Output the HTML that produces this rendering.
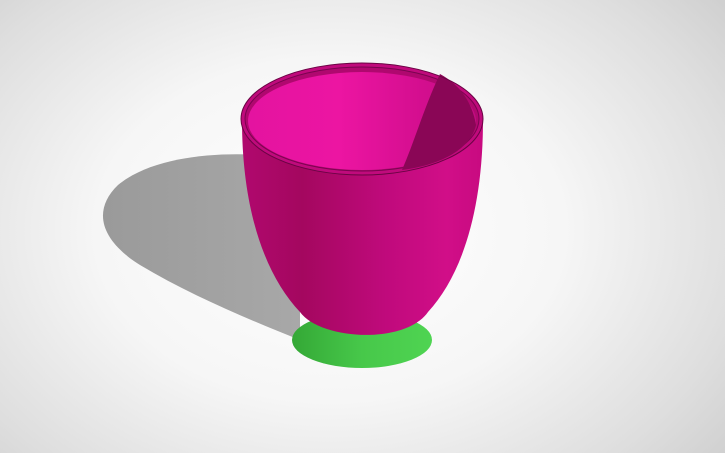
<!DOCTYPE html>
<html><head><style>
html,body{margin:0;padding:0;width:725px;height:453px;overflow:hidden}
body{background:radial-gradient(ellipse 520px 380px at 330px 230px,#ffffff 0%,#f6f6f6 45%,#dedede 80%,#cdcdcd 100%)}
</style></head><body>
<svg width="725" height="453" viewBox="0 0 725 453" xmlns="http://www.w3.org/2000/svg">
<defs>
<linearGradient id="sh" x1="0" y1="0" x2="1" y2="0">
<stop offset="0" stop-color="#9a9a9a"/><stop offset="1" stop-color="#a8a8a8"/></linearGradient>
<linearGradient id="body" x1="0" y1="0" x2="1" y2="0">
<stop offset="0" stop-color="#b0086e"/><stop offset="0.25" stop-color="#a4075f"/><stop offset="0.6" stop-color="#c00a7c"/><stop offset="0.85" stop-color="#d10e88"/><stop offset="1" stop-color="#c80a80"/></linearGradient>
<linearGradient id="inner" x1="0" y1="0" x2="1" y2="0">
<stop offset="0" stop-color="#e413a0"/><stop offset="0.4" stop-color="#ec15a2"/><stop offset="0.7" stop-color="#d80f92"/><stop offset="1" stop-color="#c40c82"/></linearGradient>
<linearGradient id="gr" x1="0" y1="0" x2="1" y2="0">
<stop offset="0" stop-color="#34a836"/><stop offset="0.5" stop-color="#47c84a"/><stop offset="1" stop-color="#4fd452"/></linearGradient>
</defs>
<path d="M300 160 C250 150 160 150 118 185 C92 210 100 240 140 265 C190 295 250 320 300 340 Z" fill="url(#sh)"/>
<ellipse cx="362" cy="340" rx="70" ry="28" fill="url(#gr)"/>
<path d="M242 120 C242 210 265 275 300 312 C320 340 405 345 428 312 C462 275 483 210 483 120 Z" fill="url(#body)"/>
<ellipse cx="362" cy="119" rx="121" ry="56" fill="#c00a7c"/>
<ellipse cx="362" cy="119" rx="117" ry="52" fill="#b0086f" stroke="#7a0450" stroke-width="1"/>
<ellipse cx="362" cy="121" rx="114" ry="49" fill="url(#inner)"/>
<path d="M440 74 C425 105 415 140 402 170 C440 165 470 150 476 125 C472 102 460 85 440 74Z" fill="#8a0656"/>
<ellipse cx="362" cy="119" rx="121" ry="56" fill="none" stroke="#6a0444" stroke-width="1"/>
</svg>
</body></html>
